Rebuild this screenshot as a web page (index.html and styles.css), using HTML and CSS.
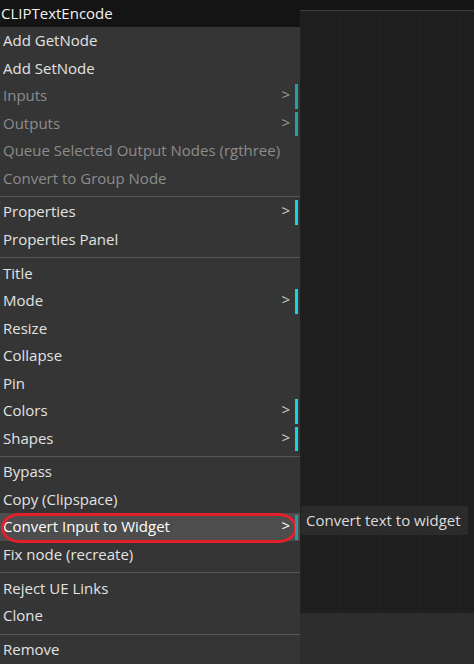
FILE: index.html
```html
<!DOCTYPE html>
<html>
<head>
<meta charset="utf-8">
<link rel="stylesheet" href="styles.css">
</head>
<body>
<div class="app">
  <div class="left">
    <div class="title">CLIPTextEncode</div>
    <div class="menu">
      <div class="item">Add GetNode</div>
      <div class="item">Add SetNode</div>
      <div class="item disabled sub">Inputs<span class="arrow">&gt;</span></div>
      <div class="item disabled sub">Outputs<span class="arrow">&gt;</span></div>
      <div class="item disabled">Queue Selected Output Nodes (rgthree)</div>
      <div class="item disabled">Convert to Group Node</div>
      <div class="sep"></div>
      <div class="item sub">Properties<span class="arrow">&gt;</span></div>
      <div class="item">Properties Panel</div>
      <div class="sep"></div>
      <div class="item">Title</div>
      <div class="item sub">Mode<span class="arrow">&gt;</span></div>
      <div class="item">Resize</div>
      <div class="item">Collapse</div>
      <div class="item">Pin</div>
      <div class="item sub">Colors<span class="arrow">&gt;</span></div>
      <div class="item sub">Shapes<span class="arrow">&gt;</span></div>
      <div class="sep"></div>
      <div class="item">Bypass</div>
      <div class="item">Copy (Clipspace)</div>
      <div class="item sub active">Convert Input to Widget<span class="arrow">&gt;</span>
        <div class="ring"></div>
        <div class="submenu">Convert text to widget</div>
      </div>
      <div class="item">Fix node (recreate)</div>
      <div class="sep"></div>
      <div class="item">Reject UE Links</div>
      <div class="item">Clone</div>
      <div class="sep"></div>
      <div class="item">Remove</div>
    </div>
  </div>
  <div class="right">
    <div class="topstrip"></div>
    <div class="canvas"></div>
    <div class="panel"></div>
  </div>
</div>
</body>
</html>
```

FILE: styles.css
```css
html, body {
  margin: 0;
  padding: 0;
  background: #1e1e1e;
}
.app {
  width: 474px;
  height: 664px;
  display: flex;
  overflow: hidden;
  font-family: "Open Sans", "Noto Sans", sans-serif;
  font-size: 15px;
}
.left {
  width: 300px;
  display: flex;
  flex-direction: column;
  flex-shrink: 0;
}
.title {
  height: 27px;
  background: #141414;
  color: #f2f2f2;
  padding-left: 1px;
  line-height: 27px;
  box-sizing: border-box;
  white-space: nowrap;
}
.menu {
  flex: 1;
  background: #353535;
}
.item {
  position: relative;
  height: 27.5px;
  line-height: 27.5px;
  padding-left: 3px;
  color: #e2e2e2;
  white-space: nowrap;
}
.item.disabled {
  color: #8c8c8c;
}
.arrow {
  position: absolute;
  right: 10px;
  top: -1px;
  color: #cfcfcf;
}
.item.disabled .arrow {
  color: #9a9a9a;
}
.sub::after {
  content: "";
  position: absolute;
  right: 2px;
  top: 2px;
  bottom: 1px;
  width: 3px;
  background: #14d6e0;
}
.sub.disabled::after {
  background: #1fa3a3;
}
.sep {
  margin-top: 4px;
  margin-bottom: 1.25px;
  border-top: 1px solid #575757;
}
.item.active {
  background: #4d4d4d;
  color: #ffffff;
}
.item.active .arrow {
  color: #ffffff;
}
.item.active::after {
  background: #2a9aa0;
}
.ring {
  position: absolute;
  left: 1px;
  right: 3px;
  top: 0;
  height: 30px;
  border: 3.5px solid #e3202b;
  border-radius: 18px / 15px;
  box-sizing: border-box;
}
.submenu {
  position: absolute;
  left: 301px;
  top: -7px;
  width: 167px;
  height: 29px;
  line-height: 29px;
  padding-left: 5px;
  box-sizing: border-box;
  background: #2b2b2b;
  color: #dcdcdc;
}
.right {
  flex: 1;
  display: flex;
  flex-direction: column;
}
.topstrip {
  height: 10px;
  background: #141414;
  border-bottom: 1px solid #3a3a3a;
}
.canvas {
  flex: 1;
  background-color: #1e1e1e;
  background-image:
    linear-gradient(rgba(255,255,255,0.012) 1px, transparent 1px),
    linear-gradient(90deg, rgba(255,255,255,0.012) 1px, transparent 1px);
  background-size: 40px 40px;
}
.panel {
  height: 51px;
  background: #2d2d2d;
}
```
